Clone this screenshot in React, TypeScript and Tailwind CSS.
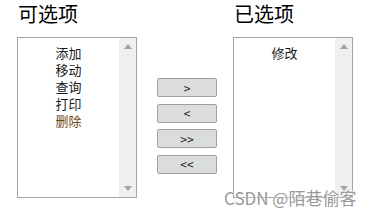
import React from "react";

const ListBox = ({ items }: { items: { label: string; color: string }[] }) => (
  <div className="w-[120px] h-[161px] border border-[#a5a5a5] bg-white flex">
    <div className="flex-1 pt-[6px] flex flex-col items-center text-[13px] leading-[17px]">
      {items.map((it) => (
        <div key={it.label} className={it.color}>
          {it.label}
        </div>
      ))}
    </div>
    <div className="w-[17px] bg-[#f0f0f0] flex flex-col justify-between items-center py-[6px]">
      <svg width="8" height="5" viewBox="0 0 8 5">
        <polygon points="4,0 8,5 0,5" fill="#a3a3a3" />
      </svg>
      <svg width="8" height="5" viewBox="0 0 8 5">
        <polygon points="0,0 8,0 4,5" fill="#a3a3a3" />
      </svg>
    </div>
  </div>
);

const Btn = ({ label }: { label: string }) => (
  <button className="w-[60px] h-[19px] bg-[#dadddc] border border-[#a0a0a0] rounded-[2px] text-[12px] leading-none text-[#1a1a1a] flex items-center justify-center">
    {label}
  </button>
);

export default function App() {
  const left = [
    { label: "添加", color: "text-[#1a1a1a]" },
    { label: "移动", color: "text-[#1a1a1a]" },
    { label: "查询", color: "text-[#1a1a1a]" },
    { label: "打印", color: "text-[#1a1a1a]" },
    { label: "删除", color: "text-[#6e4a18]" },
  ];
  const right = [{ label: "修改", color: "text-[#1a1a1a]" }];

  return (
    <div
      className="relative w-[376px] h-[218px] bg-white overflow-hidden"
      style={{ fontFamily: '"Noto Sans CJK SC", "Microsoft YaHei", sans-serif' }}
    >
      <div className="flex pl-[17px] pt-[1px]">
        <div className="flex flex-col">
          <div className="pl-[1px] text-[20px] leading-[26px] text-black">可选项</div>
          <div className="mt-[10px]">
            <ListBox items={left} />
          </div>
        </div>
        <div className="ml-[20px] mt-[77px] flex flex-col gap-[6.5px]">
          <Btn label=">" />
          <Btn label="<" />
          <Btn label=">>" />
          <Btn label="<<" />
        </div>
        <div className="ml-[16px] flex flex-col">
          <div className="pl-[1px] text-[20px] leading-[26px] text-black">已选项</div>
          <div className="mt-[10px]">
            <ListBox items={right} />
          </div>
        </div>
      </div>
      <div
        className="absolute left-[224px] top-[186px] text-[17px] leading-[24px] text-[#999999]"
        style={{ textShadow: "0 0 2px #fff, 0 0 2px #fff" }}
      >
        CSDN @陌巷偷客
      </div>
    </div>
  );
}
